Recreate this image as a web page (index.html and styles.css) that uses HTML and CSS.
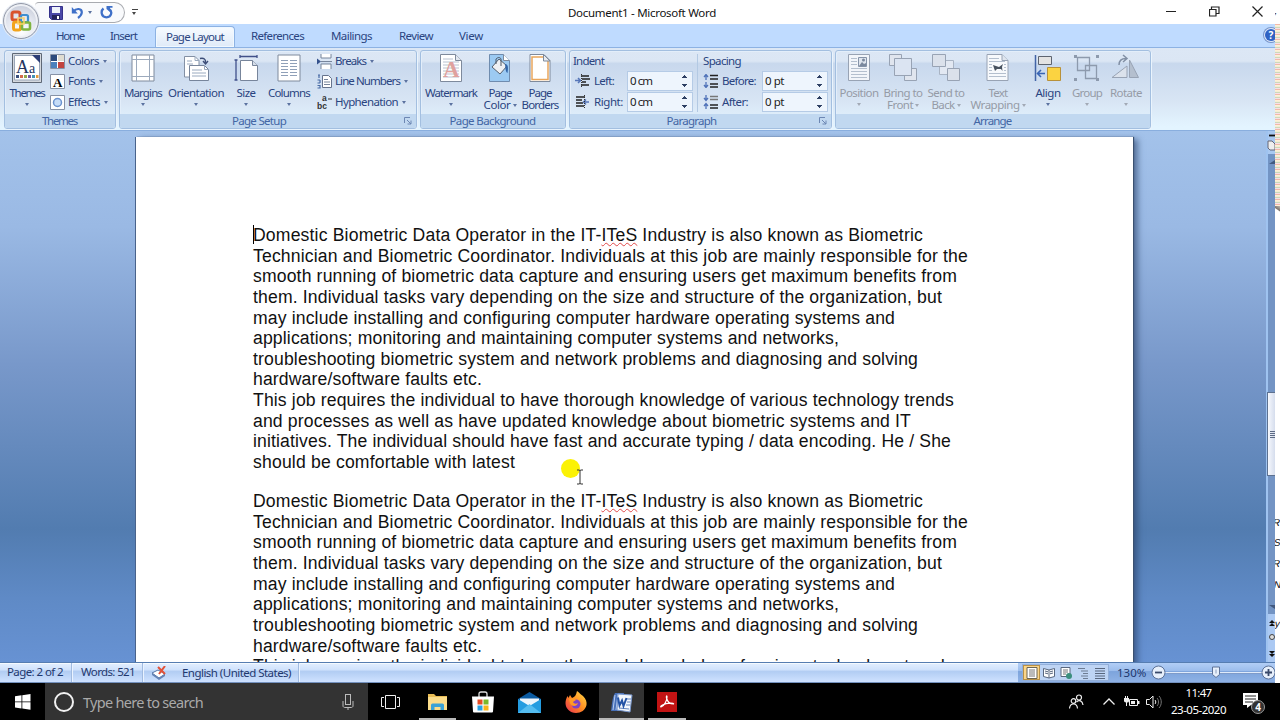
FILE: index.html
```html
<!DOCTYPE html>
<html lang="en">
<head>
    <meta charset="UTF-8">
    <meta name="viewport" content="width=device-width, initial-scale=1.0">
    <title>Document1 - Microsoft Word</title>
    <link rel="stylesheet" href="styles.css">
</head>
<body>
<div class="screen">
    <div class="word">
        <header class="title-bar">
            <div class="quick-access">
                <svg width="14" height="14" viewBox="0 0 14 14"><path d="M.5.5h13v13h-11l-2-2z" fill="#4a48a8" stroke="#35318a"/><path d="M3 1h8v6H3z" fill="#eef2fb"/><path d="M3 9h8v4.500H3z" fill="#24245c"/><path d="M8 10h2v3H8z" fill="#fff"/></svg>
                <svg class="undo" width="13" height="13" viewBox="0 0 13 13"><path d="M2.500 5.500C5 2 11 2 10.800 6.500 10.600 9 9 10.500 7 12" fill="none" stroke="#3f70c8" stroke-width="2.200"/><path d="M.8 1v6.500h6z" fill="#3f70c8"/></svg>
                <i class="arrow"></i>
                <svg class="redo" width="13" height="13" viewBox="0 0 13 13"><path d="M3.500 2.500C.5 5 1 11.200 6.500 11.300 12 11.200 12.500 5 9 3" fill="none" stroke="#3f70c8" stroke-width="2.300"/><path d="M6.500 0h6v1.800H10V6L6.500 3z" fill="#3f70c8"/></svg>
            </div>
            <div class="customize"><i class="arrow"></i></div>
            <div class="doc-title"><span data-w="148">Document1 - Microsoft Word</span></div>
            <div class="window-buttons">
                <svg width="11" height="11" viewBox="0 0 11 11"><path d="M0 5.500h10" stroke="#222"/></svg>
                <svg width="11" height="11" viewBox="0 0 11 11"><path d="M.5 3.500h6.500v6.500H.5zM2.500 3.500V1h7.500v6.500H7" fill="none" stroke="#222" stroke-width="1.200"/></svg>
                <svg width="11" height="11" viewBox="0 0 11 11"><path d="M.5.5l10 10M10.500.5l-10 10" stroke="#222" stroke-width="1.200"/></svg>
            </div>
        </header>
        <div class="office-button">
            <svg width="24" height="24" viewBox="0 0 24 24" fill="none"><rect x="3" y="3" width="8" height="8" rx="2" stroke="#d9532c" stroke-width="3"/><rect x="12" y="6" width="7" height="7" rx="1.500" stroke="#3f8fd0" stroke-width="2.200"/><rect x="4.500" y="13" width="7" height="8" rx="2" stroke="#f2a41c" stroke-width="3"/><rect x="13" y="13.500" width="8" height="7" rx="1.500" stroke="#7fb440" stroke-width="2.600"/><rect x="9" y="9" width="6" height="6" stroke="#fbd36b" stroke-width="1.500"/></svg>
        </div>

        <nav class="tabs">
            <span class="tab t-home"><span data-w="28">Home</span></span>
            <span class="tab t-insert"><span data-w="27">Insert</span></span>
            <span class="tab active"><span data-w="58">Page Layout</span></span>
            <span class="tab t-references"><span data-w="53">References</span></span>
            <span class="tab t-mailings"><span data-w="41">Mailings</span></span>
            <span class="tab t-review"><span data-w="34">Review</span></span>
            <span class="tab t-view"><span data-w="24">View</span></span>
            <span class="help">?</span>
        </nav>

        <div class="ribbon">
            <section class="group g-themes">
                <div class="tools">
                    <div class="big w46">
                        <svg width="30" height="30" viewBox="0 0 30 30"><path d="M.5.5h29v29H.5z" fill="#d4d8de" stroke="#5f6876"/><path d="M2.500 2.500h19l6 6v18.500h-25z" fill="#fff" stroke="#9aa6b8"/><path d="M20 2h8v8z" fill="#2b3d76"/><text x="4" y="20" class="aa" font-size="18">A</text><text x="17" y="20" class="aa" font-size="14">a</text><path d="M4 23.500h3" stroke="#394f7d" stroke-width="3"/><path d="M8 23.500h3" stroke="#d46a4d" stroke-width="3"/><path d="M12 23.500h3" stroke="#94a94b" stroke-width="3"/><path d="M16 23.500h3" stroke="#7258a0" stroke-width="3"/><path d="M20 23.500h3" stroke="#4394b5" stroke-width="3"/><path d="M24 23.500h2.500" stroke="#e39a3c" stroke-width="3"/></svg>
                        <span data-w="35">Themes</span><i class="arrow"></i>
                    </div>
                    <div class="smalls">
                        <div class="small"><svg width="15" height="15" viewBox="0 0 15 15"><path d="M.5.5h14v14H.5z" fill="#fff" stroke="#8792a6"/><path d="M1 1h6v6H1z" fill="#2c4a7d"/><path d="M8 1h6v6H8z" fill="#dfdcd1"/><path d="M1 8h6v6H1z" fill="#4c80bc"/><path d="M8 8h6v6H8z" fill="#c1443f"/></svg><span data-w="31">Colors</span><i class="arrow"></i></div>
                        <div class="small"><svg width="15" height="15" viewBox="0 0 15 15"><path d="M.5.5h14v14H.5z" fill="#fff" stroke="#8792a6"/><text x="3" y="12.500" class="fonts-a">A</text></svg><span data-w="27">Fonts</span><i class="arrow"></i></div>
                        <div class="small"><svg width="15" height="15" viewBox="0 0 15 15"><path d="M.5.5h14v14H.5z" fill="#fff" stroke="#8792a6"/><circle cx="7.500" cy="7.500" r="4" fill="#c7ddf8" stroke="#6b93cf" stroke-width="1.500"/></svg><span data-w="32">Effects</span><i class="arrow"></i></div>
                    </div>
                </div>
                <footer><span data-w="35">Themes</span></footer>
            </section>

            <section class="group g-setup">
                <div class="tools">
                    <div class="big w48">
                        <svg width="24" height="30" viewBox="0 0 24 30"><path d="M1 2h22v26H1z" fill="#fff" stroke="#7e8a9c"/><path d="M5.500 2v26M18.500 2v26M1 6.500h22M1 23.500h22" stroke="#9caabd"/></svg>
                        <span data-w="38">Margins</span><i class="arrow"></i>
                    </div>
                    <div class="big w58">
                        <svg width="28" height="30" viewBox="0 0 28 30"><path d="M2.500 3.500H13l4 4V24H2.500z" fill="#fff" stroke="#8390a4"/><path d="M13 3.500v4h4M5 8h5M5 11h6" fill="none" stroke="#9aaabf"/><path d="M7.500 12.500h15l4 4v11h-19z" fill="#fff" stroke="#77859b"/><path d="M22.500 12.500v4h4M10 17h10M10 20h14M10 23h14" fill="none" stroke="#9aaabf"/><path d="M18 5.500c4-1 6 1 5.500 4M21 8l2.500 3L26 8" fill="none" stroke="#3d4e78" stroke-width="1.400"/></svg>
                        <span data-w="56">Orientation</span><i class="arrow"></i>
                    </div>
                    <div class="big w42">
                        <svg width="24" height="30" viewBox="0 0 24 30"><path d="M6.500 7.500h12l5 5v15h-17z" fill="#fff" stroke="#77859b"/><path d="M18.500 7.500v5h5" fill="#d6deea" stroke="#77859b"/><path d="M6 3.500h17M6 2v3M23 2v3M2 7v20M.5 7h3M.5 27h3" stroke="#40508a" stroke-width="1.300"/></svg>
                        <span data-w="19">Size</span><i class="arrow"></i>
                    </div>
                    <div class="big w44">
                        <svg width="24" height="30" viewBox="0 0 24 30"><path d="M1 2h22v26H1z" fill="#fff" stroke="#7e8a9c"/><path d="M4 7.500h7M4 10.500h7M4 13.500h7M4 16.500h7M4 19.500h7M4 22.500h7M13 7.500h7M13 10.500h7M13 13.500h7M13 16.500h7M13 19.500h7M13 22.500h7" stroke="#8fa0b8"/></svg>
                        <span data-w="42">Columns</span><i class="arrow"></i>
                    </div>
                    <div class="smalls">
                        <div class="small"><svg width="15" height="15" viewBox="0 0 15 15"><path d="M4 0v4h10V0M4 15v-5h10v5" fill="#fff" stroke="#77859b"/><path d="M4 7.500h11" stroke="#77859b"/><path d="M0 4.500v6l4-3z" fill="#34518c"/></svg><span data-w="31">Breaks</span><i class="arrow"></i></div>
                        <div class="small"><svg width="15" height="15" viewBox="0 0 15 15"><path d="M5.500 1.500h6l3 3v9h-9z" fill="#fff" stroke="#65738c"/><path d="M7 5.500h4M7 8h6M7 10.500h6" stroke="#77859b"/><path d="M1 1h2M2 1v3M.5 6H3M.5 9H3M.5 11.500H3v2.500H.5M3 6v3" fill="none" stroke="#496ba5" stroke-width="1.200"/></svg><span data-w="65">Line Numbers</span><i class="arrow"></i></div>
                        <div class="small"><svg width="15" height="15" viewBox="0 0 15 15"><text x="0" y="14" class="hy">bc</text><text x="5" y="6" class="hy">a</text><path d="M11 4h4" stroke="#333"/></svg><span data-w="63">Hyphenation</span><i class="arrow"></i></div>
                    </div>
                </div>
                <footer><span data-w="54">Page Setup</span><svg class="launcher" width="8" height="8" viewBox="0 0 8 8"><path d="M.5 6V.5H6M3 3l4 4M7 3.500V7H3.500" fill="none" stroke="#6d87b3"/></svg></footer>
            </section>

            <section class="group g-background">
                <div class="tools">
                    <div class="big w62">
                        <svg width="22" height="30" viewBox="0 0 22 30"><path d="M.5 1.500h15l6 6v21H.5z" fill="#fff" stroke="#7e8a9c"/><path d="M15.500 1.500v6h6" fill="#e3e8f0" stroke="#7e8a9c"/><path d="M3 6h10M3 9h16M3 12h16M3 15h16M3 18h16M3 21h16M3 24h16" stroke="#b9c2d0"/><text x="3" y="24" class="wm">A</text></svg>
                        <span data-w="52">Watermark</span><i class="arrow"></i>
                    </div>
                    <div class="big w36">
                        <svg width="24" height="30" viewBox="0 0 24 30"><path d="M1.500 1.500h14l6 6v21h-20z" fill="#9ccaf2" stroke="#6f8caf"/><path d="M15.500 1.500v6h6" fill="#fff" stroke="#7e8a9c"/><path d="M4 14l7-8 8 7-7 8z" fill="#eef0f3" stroke="#56616f"/><path d="M8 11V6c2-2 4-2 5 0v7" fill="none" stroke="#4c5664"/><path d="M17 11c4 0 3 6 2.500 9-2-1-2-5-2.500-9z" fill="#3265a8"/></svg>
                        <span data-w="23">Page</span><span class="line2"><span data-w="27">Color</span><i class="arrow"></i></span>
                    </div>
                    <div class="big w44">
                        <svg width="22" height="30" viewBox="0 0 22 30"><path d="M1 1.500h14l6 6v21H1z" fill="#fff" stroke="#7e8a9c"/><path d="M3 4h12l4 4v18.500H3z" fill="#fff" stroke="#e9a65c" stroke-width="1.500"/><path d="M14.500 1.500v6.500h6.500z" fill="#e8ebf1" stroke="#7e8a9c"/></svg>
                        <span data-w="23">Page</span><span class="line2"><span data-w="37">Borders</span></span>
                    </div>
                </div>
                <footer><span data-w="86">Page Background</span></footer>
            </section>

            <section class="group g-paragraph">
                <div class="tools">
                    <div class="fields indent">
                        <div class="heading"><span data-w="31">Indent</span></div>
                        <div class="field"><svg width="15" height="14" viewBox="0 0 15 14"><path d="M6 2h8M7 5h8M7 8h4M6 11h8" stroke="#222" stroke-width="1.500"/><path d="M0 6.500h5M3 4l2.500 2.500L3 9" fill="none" stroke="#5676b8" stroke-width="1.500"/><path d="M6.500 0v14" stroke="#333" stroke-dasharray="1 1"/></svg><label data-w="20">Left:</label><div class="spin"><span data-w="22">0 cm</span><b></b></div></div>
                        <div class="field"><svg width="15" height="14" viewBox="0 0 15 14"><path d="M1 2h9M1 5h6M1 8h7M1 11h8" stroke="#222" stroke-width="1.500"/><path d="M9 7h5M11 4.500L8.500 7 11 9.500" fill="none" stroke="#5676b8" stroke-width="1.500"/><path d="M9.500 0v14" stroke="#333" stroke-dasharray="1 1"/></svg><label data-w="29">Right:</label><div class="spin"><span data-w="22">0 cm</span><b></b></div></div>
                    </div>
                    <div class="fields spacing">
                        <div class="heading"><span data-w="38">Spacing</span></div>
                        <div class="field"><svg width="15" height="14" viewBox="0 0 15 14"><path d="M7 1.500h8M7 5h8M7 10h8M7 13h8" stroke="#222" stroke-width="1.300"/><path d="M3 6V1M1 3l2-2.500L5 3M3 8v5M1 11l2 2.500L5 11" fill="none" stroke="#4f72b8" stroke-width="1.300"/></svg><label data-w="34">Before:</label><div class="spin"><span data-w="19">0 pt</span><b></b></div></div>
                        <div class="field"><svg width="15" height="14" viewBox="0 0 15 14"><path d="M7 1.500h8M7 4.500h8" stroke="#777" stroke-width="1.300"/><path d="M7 10h8M7 13h8" stroke="#222" stroke-width="1.300"/><path d="M3 0v5M1 3l2 2.500L5 3M3 14V8.500M1 11l2-2.500L5 11" fill="none" stroke="#4f72b8" stroke-width="1.300"/></svg><label data-w="26">After:</label><div class="spin"><span data-w="19">0 pt</span><b></b></div></div>
                    </div>
                </div>
                <footer><span data-w="50">Paragraph</span><svg class="launcher" width="8" height="8" viewBox="0 0 8 8"><path d="M.5 6V.5H6M3 3l4 4M7 3.500V7H3.500" fill="none" stroke="#6d87b3"/></svg></footer>
            </section>

            <section class="group g-arrange">
                <div class="tools">
                    <div class="big w48 off">
                        <svg width="24" height="30" viewBox="0 0 24 30"><path d="M1.500 1.500h21v26h-21z" fill="#f2f5fa" stroke="#98a3b4"/><path d="M4 5.500h6M4 8.500h6M4 11.500h6M4 15.500h16M4 18.500h16M4 21.500h16M4 24.500h16" stroke="#b4bfce"/><path d="M11.500 4.500h8v9h-8z" fill="#dfe5ee" stroke="#8593a8"/><path d="M12 13l3-4 2 2 2-1v3z" fill="#7b899e"/><circle cx="16.500" cy="7" r="1.500" fill="#7b899e"/></svg>
                        <span data-w="39">Position</span><i class="arrow"></i>
                    </div>
                    <div class="big w40 off">
                        <svg width="30" height="30" viewBox="0 0 30 30"><path d="M1.500 1.500h12v11h-12zM16.500 15.500h12v12h-12z" fill="#e0e5ee" stroke="#98a3b4"/><path d="M6.500 5.500h17v17h-17z" fill="#dbe4f2" stroke="#98a3b4"/></svg>
                        <span data-w="39">Bring to</span><span class="line2"><span data-w="26">Front</span><i class="arrow"></i></span>
                    </div>
                    <div class="big w46 off">
                        <svg width="30" height="30" viewBox="0 0 30 30"><path d="M8.500 7.500h14v14h-14z" fill="#e2e8f2" stroke="#a9b4c4"/><path d="M1.500 1.500h13v12h-13zM16.500 15.500h12v12h-12z" fill="#dbe1eb" stroke="#98a3b4"/></svg>
                        <span data-w="37">Send to</span><span class="line2"><span data-w="23">Back</span><i class="arrow"></i></span>
                    </div>
                    <div class="big w58 off">
                        <svg width="24" height="30" viewBox="0 0 24 30"><path d="M1 1.500h15l6 6v20H1z" fill="#f7f9fc" stroke="#98a3b4"/><path d="M16 1.500v6h6" fill="#dfe5ee" stroke="#98a3b4"/><path d="M3 5.500h10M3 8.500h16M3 11.500h3M18 11.500h2M3 14.500h3M18 14.500h2M3 17.500h3M18 17.500h2M3 20.500h17M3 23.500h17" stroke="#b4bfce"/><path d="M7 12l3 1 3 1 4-3-1 3 .5 4-1.500-2h-4l-2 2z" fill="#47515e"/></svg>
                        <span data-w="19">Text</span><span class="line2"><span data-w="49">Wrapping</span><i class="arrow"></i></span>
                    </div>
                    <div class="big w42">
                        <svg width="28" height="30" viewBox="0 0 28 30"><path d="M1.500 2v26" stroke="#4264a6" stroke-width="1.500"/><path d="M4.500 3.500h13v8h-13z" fill="#e3e3e3" stroke="#5d6470"/><path d="M13.500 14.500h13v13h-13z" fill="#fbd341" stroke="#b8913a"/><path d="M4 20.500h7M7 17l-3.500 3.500L7 24" fill="none" stroke="#3965b4" stroke-width="1.600"/></svg>
                        <span data-w="25">Align</span><i class="arrow"></i>
                    </div>
                    <div class="big w36 off">
                        <svg width="26" height="30" viewBox="0 0 26 30"><path d="M3.500 4.500h12v13h-12zM11.500 12.500h11v13h-11z" fill="none" stroke="#8d9aad" stroke-width="1.300"/><path d="M0 2h3v3H0zM22 2h3v3h-3zM0 25h3v3H0zM22 25h3v3h-3z" fill="#8d9aad"/></svg>
                        <span data-w="30">Group</span><i class="arrow"></i>
                    </div>
                    <div class="big w42 off">
                        <svg width="30" height="30" viewBox="0 0 30 30"><path d="M1 24.500h15V13z" fill="#dbe2ec" stroke="#98a3b4"/><path d="M18.500 24.500V7l9 17.500z" fill="#b4bfce" stroke="#98a3b4"/><path d="M8 12c0-5 3-6.500 7-6.500M12 2l4 3.500L12 9" fill="none" stroke="#8290a5" stroke-width="1.500"/></svg>
                        <span data-w="32">Rotate</span><i class="arrow"></i>
                    </div>
                </div>
                <footer><span data-w="38">Arrange</span></footer>
            </section>
        </div>

        <main class="workspace">
            <article class="page">
                <div class="paragraph">
                    <i class="caret"></i>
                    <p><span data-w="670">Domestic Biometric Data Operator in the IT-<u>ITeS</u> Industry is also known as Biometric</span></p>
                    <p><span data-w="715">Technician and Biometric Coordinator. Individuals at this job are mainly responsible for the</span></p>
                    <p><span data-w="704">smooth running of biometric data capture and ensuring users get maximum benefits from</span></p>
                    <p><span data-w="689">them. Individual tasks vary depending on the size and structure of the organization, but</span></p>
                    <p><span data-w="642">may include installing and configuring computer hardware operating systems and</span></p>
                    <p><span data-w="586">applications; monitoring and maintaining computer systems and networks,</span></p>
                    <p><span data-w="665">troubleshooting biometric system and network problems and diagnosing and solving</span></p>
                    <p><span data-w="229">hardware/software faults etc.</span></p>
                    <p><span data-w="701">This job requires the individual to have thorough knowledge of various technology trends</span></p>
                    <p><span data-w="658">and processes as well as have updated knowledge about biometric systems and IT</span></p>
                    <p><span data-w="698">initiatives. The individual should have fast and accurate typing / data encoding. He / She</span></p>
                    <p><span data-w="262">should be comfortable with latest</span></p>
                </div>
                <div class="paragraph">
                    <p><span data-w="670">Domestic Biometric Data Operator in the IT-<u>ITeS</u> Industry is also known as Biometric</span></p>
                    <p><span data-w="715">Technician and Biometric Coordinator. Individuals at this job are mainly responsible for the</span></p>
                    <p><span data-w="704">smooth running of biometric data capture and ensuring users get maximum benefits from</span></p>
                    <p><span data-w="689">them. Individual tasks vary depending on the size and structure of the organization, but</span></p>
                    <p><span data-w="642">may include installing and configuring computer hardware operating systems and</span></p>
                    <p><span data-w="586">applications; monitoring and maintaining computer systems and networks,</span></p>
                    <p><span data-w="665">troubleshooting biometric system and network problems and diagnosing and solving</span></p>
                    <p><span data-w="229">hardware/software faults etc.</span></p>
                    <p><span data-w="701">This job requires the individual to have thorough knowledge of various technology trends</span></p>
                </div>
            </article>
            <div class="scrollbar">
                <div class="scroll-top"><svg width="9" height="23" viewBox="0 0 9 23"><path d="M3 4.500h6" stroke="#111" stroke-width="1.800"/><path d="M2 10h4l3 3v6H4l-2-2z" fill="#eee" stroke="#667"/></svg></div>
                <div class="track">
                    <i class="up"></i>
                    <div class="thumb"><i></i></div>
                    <i class="down"></i>
                </div>
                <div class="browse"><svg width="9" height="46" viewBox="0 0 9 46"><path d="M3 9l3-3 3 3zM3 12l3-3 3 3z" fill="#111"/><circle cx="6" cy="23" r="2.500" fill="#ddd" stroke="#444"/><path d="M3 37h6l-3 3zM3 40h6l-3 3z" fill="#111"/></svg></div>
            </div>
            <div class="spotlight"></div>
            <svg class="ibeam" width="8" height="16" viewBox="0 0 8 16"><path d="M1 1h2l1 .5L5 1h2M4 1.500v13M1 15h2l1-.5 1 .5h2" fill="none" stroke="#333"/></svg>
        </main>

        <div class="status-bar">
            <span class="cell c-page"><span data-w="56">Page: 2 of 2</span></span>
            <span class="cell c-words"><span data-w="54">Words: 521</span></span>
            <span class="cell c-lang"><svg width="16" height="14" viewBox="0 0 16 14"><path d="M1 7l6-3 7 4-6 4z" fill="#fff" stroke="#5577aa"/><path d="M1 7v2l7 5 6-4V8l-6 4z" fill="#6684b5"/><path d="M7 1l7 7M14 0L8 8" stroke="#e25238" stroke-width="2"/></svg><span data-w="109">English (United States)</span></span>
            <div class="zoom-area">
                <div class="views">
                    <span class="on"><svg width="12" height="12" viewBox="0 0 12 12"><path d="M1 .5h10v11H1z" fill="#fff" stroke="#6b6552"/><path d="M3 3h6M3 5h6M3 7h6M3 9h6" stroke="#777"/></svg></span>
                    <span><svg width="12" height="12" viewBox="0 0 12 12"><path d="M.5 1.500L6 3l5.500-1.500v8L6 11 .5 9.500zM6 3v8" fill="#fff" stroke="#59677e"/><path d="M2 4l3 .8M2 6l3 .8M7 4.800L10 4M7 6.800L10 6" stroke="#59677e"/></svg></span>
                    <span><svg width="12" height="12" viewBox="0 0 12 12"><path d="M1 .5h9v9H1z" fill="#fff" stroke="#59677e"/><path d="M3 3h5M3 5h5M3 7h3" stroke="#777"/><circle cx="9" cy="9" r="3" fill="#3b8f7d"/></svg></span>
                    <span><svg width="12" height="12" viewBox="0 0 12 12"><path d="M1 1.500h7M4 4h7M6 6.500h5M4 9h7M6 11.500h5" stroke="#6d7c93"/></svg></span>
                    <span><svg width="12" height="12" viewBox="0 0 12 12"><path d="M1 1.500h10M1 4h10M1 6.500h10M1 9h10M1 11.500h10" stroke="#59677e" stroke-width="1.200"/></svg></span>
                </div>
                <span class="percent" data-w="25">130%</span>
                <svg width="124" height="18" viewBox="0 0 124 18"><path d="M14 8.500h102" stroke="#dfeafa"/><path d="M16 9.500h98" stroke="#7e9bca"/><circle cx="7.500" cy="8.500" r="6.500" fill="#e6effb" stroke="#5d7298"/><path d="M4 8.500h7" stroke="#39496a" stroke-width="1.800"/><circle cx="117.500" cy="8.500" r="6.500" fill="#e6effb" stroke="#5d7298"/><path d="M114 8.500h7M117.500 5v7" stroke="#39496a" stroke-width="1.800"/><path d="M61.500 3h7v7.500l-3.500 3-3.500-3z" fill="#e6effb" stroke="#5d7298"/><path d="M65 5.500v4" stroke="#8a9cbc"/></svg>
            </div>
        </div>
    </div>

    <aside class="edge">
        <span class="e1">‚</span>
        <span class="e2">R</span><span class="e3">S</span><span class="e4">R</span><span class="e5">N</span><span class="e6">y</span>
    </aside>

    <div class="taskbar">
        <div class="start"><svg width="16" height="16" viewBox="0 0 16 16" fill="#fff"><path d="M0 2.300l6.500-1v6.200H0zM7.300 1.200L15.500 0v7.500H7.300zM0 8.300h6.500v6.200l-6.500-1zM7.300 8.300h8.200v7.500l-8.200-1.200z"/></svg></div>
        <div class="search">
            <i class="cortana"></i><span data-w="120">Type here to search</span>
            <svg width="12" height="16" viewBox="0 0 12 16" fill="none" stroke="#bbb"><rect x="3.500" y=".5" width="5" height="10"/><path d="M1 7v5c0 1 1 1.500 2 1.500h6c1 0 2-.5 2-1.500V7M6 13.500V16"/></svg>
        </div>
        <div class="app"><svg width="20" height="14" viewBox="0 0 20 14" fill="none" stroke="#eee"><path d="M4.500.5h10v13h-10zM3 2.500H.5v9H3M16 2.500h2.500v9H16"/></svg></div>
        <div class="app open explorer"><svg width="21" height="18" viewBox="0 0 21 18"><path d="M1 1h6l2 2h11v14H1z" fill="#e9bd55"/><path d="M1 4h19v13H1z" fill="#fbdd8b"/><path d="M4 17v-5q0-1.500 1.500-1.500h10q1.500 0 1.500 1.500v5h-3.500v-3h-6v3z" fill="#3aa2d6"/></svg></div>
        <div class="app"><svg width="22" height="22" viewBox="0 0 22 22"><path d="M7 6V3q0-2 2-2h4q2 0 2 2v3" fill="none" stroke="#ddd" stroke-width="1.300"/><path d="M0 5.500h22l-1 15q0 1-1 1H2q-1 0-1-1z" fill="#fff"/><path d="M5.500 8.500h5v5h-5z" fill="#e74c25"/><path d="M11.500 8.500h5v5h-5z" fill="#7ab82a"/><path d="M5.500 14.500h5v5h-5z" fill="#28a1e2"/><path d="M11.500 14.500h5v5h-5z" fill="#f8b51b"/></svg></div>
        <div class="app"><svg width="23" height="21" viewBox="0 0 23 21"><path d="M0 7l11.500-7L23 7v4H0z" fill="#0b5a9f"/><path d="M2 6.500h19v9H2z" fill="#eef5fb"/><path d="M0 7l11.500 7L23 7v14H0z" fill="#249ce0"/><path d="M0 21l11.500-9L23 21z" fill="#55bdf0"/></svg></div>
        <div class="app"><svg width="22" height="22" viewBox="0 0 22 22"><defs><linearGradient id="fx" x1="1" y1="0" x2="0" y2="1"><stop offset="0" stop-color="#ffe14a"/><stop offset=".5" stop-color="#ff8b21"/><stop offset="1" stop-color="#e92d55"/></linearGradient></defs><path d="M12 0c3 2 4 4 6 5 3 3 4 6 3.500 9C20.500 19 16 22 11 22 5 22 .5 17.500.5 12c0-3 1-5 2-7l1 2 1.500-3 2 3c3-1 4-3 5-7z" fill="url(#fx)"/><circle cx="11" cy="13" r="4.500" fill="#7b42c9"/><path d="M4 8c3-1 5-1 7 1l-3 2c1 2 3 2 5 1-1 4-7 4-8 0z" fill="#ff9a26"/></svg></div>
        <div class="app open current"><svg width="23" height="21" viewBox="0 0 23 21"><path d="M5 1h9l-2 18H1C2 13 2 6 5 1z" fill="#476fb7"/><path d="M5 3l-2 15M8 2L6 18" stroke="#b9cdef"/><path d="M8 2l14 1-2 17-13-2z" fill="#f4f7fc" stroke="#7796cc"/><path d="M17 7h4M17 10h3.500M16 13h4M9 16l10 1" stroke="#6486c0"/><path d="M8 5.500l1.500 8 2.500-5 1.500 5.500L16.500 6" fill="none" stroke="#2453a5" stroke-width="2"/></svg></div>
        <div class="app open acrobat"><svg width="20" height="20" viewBox="0 0 20 20"><path d="M0 0h20v20H0z" fill="#c21313"/><path d="M4 15c3-1 6-6 6-10 0-2-1-1-.5 1 1 4 4 6 7 6 1-1-6-1.500-11 1-2 1-2 2-1.500 2z" fill="none" stroke="#fff" stroke-width="1.200"/></svg></div>
        <div class="tray">
            <svg class="people" width="15" height="16" viewBox="0 0 15 16" fill="none" stroke="#eee" stroke-width="1.200"><circle cx="4.500" cy="7" r="2.300"/><path d="M.5 14.500c.5-6 7.500-6 8 0"/><circle cx="10" cy="3.500" r="2.500"/><path d="M7.500 8c2.500-3 6-1 6.500 3"/></svg>
            <svg class="chevron" width="12" height="7" viewBox="0 0 12 7" fill="none" stroke="#eee" stroke-width="1.300"><path d="M.5 6.500L6 1l5.500 5.500"/></svg>
            <svg class="battery" width="16" height="12" viewBox="0 0 16 12"><path d="M5.500 3.500h8v6h-8z" fill="none" stroke="#eee"/><path d="M7 5h4v3H7zM14 5h1.500v3H14zM0 2h5v3q0 1.500-1.500 1.500H3V10H2V6.500Q0 6 0 5zM1 0h1v2H1zM3 0h1v2H3z" fill="#eee"/></svg>
            <svg class="volume" width="16" height="14" viewBox="0 0 16 14" fill="none" stroke="#eee"><path d="M.5 4.500h3L7 1v12L3.500 9.500h-3zM9 5c1 1 1 3 0 4"/><path d="M11 3c2 2 2 6 0 8M13 1c3 3 3 9 0 12" stroke="#777"/></svg>
            <div class="clock"><span data-w="26">11:47</span><span data-w="55">23-05-2020</span></div>
            <div class="notice"><svg width="16" height="16" viewBox="0 0 16 16"><path d="M0 0h15v12H8l-4 3v-3H0z" fill="#fff"/><path d="M2 3h11M2 6h11M2 9h8" stroke="#222"/></svg><b>4</b></div>
        </div>
    </div>
</div>

<script>
    // Tighten or open the tracking so each label fills its own measure
    document.querySelectorAll('[data-w]').forEach(function (el) {
        var width = el.getBoundingClientRect().width;
        var count = el.textContent.length;
        el.style.letterSpacing = ((el.dataset.w - width) / count) + 'px';
    });
</script>
</body>
</html>
```
FILE: styles.css
```css
* {
    box-sizing: border-box;
}

body {
    margin: 0;
    background: #fff;
    overflow: hidden;
    font-family: "Noto Sans", "Open Sans", sans-serif;
    font-size: 11.5px;
    color: #2a4480;
}

svg {
    display: block;
    flex: none;
}

[data-w] {
    display: inline-block;
    white-space: nowrap;
}

.screen {
    display: grid;
    grid-template: 683px 37px / 1275px 5px;
    width: 1280px;
    height: 720px;
    overflow: hidden;
}

.word {
    position: relative;
    display: flex;
    flex-direction: column;
    overflow: hidden;
}

.arrow {
    flex: none;
    width: 0;
    height: 0;
    border: 2.5px solid transparent;
    border-top: 3px solid #5b72a0;
    border-bottom: 0;
}

/* title bar */
.title-bar {
    display: flex;
    height: 24px;
    background: #fff;
    color: #111;
}

.quick-access {
    display: flex;
    align-items: center;
    width: 90px;
    height: 21px;
    margin: 2px 0 0 35px;
    padding-left: 14px;
    border: 1px solid #a9abb0;
    border-left: 0;
    border-radius: 4px 11px 11px 0;
    background: #f9fafc;
}

.undo {
    margin: 0 4px 0 8px;
}

.redo {
    margin-left: 8px;
}

.customize {
    width: 6px;
    height: 7px;
    margin: 9px 0 0 7px;
    border-top: 1.5px solid #444;
    padding-top: 2px;
}

.customize .arrow {
    display: block;
    border-top-color: #444;
}

.doc-title {
    margin-left: 430px;
    line-height: 25px;
}

.window-buttons {
    display: flex;
    gap: 32px;
    margin: 6px 12px 0 auto;
}

.office-button {
    position: absolute;
    left: 3px;
    top: 3px;
    display: flex;
    align-items: center;
    justify-content: center;
    width: 36px;
    height: 36px;
    border: 1px solid #9298a6;
    border-radius: 50%;
    background: radial-gradient(circle at 50% 80%, #fff, #e2e5ee 50%, #b9bfcf);
    box-shadow: inset 0 0 0 2px #eef0f5, 0 0 0 1px #e6ebf4;
    z-index: 1;
}

/* tabs */
.tabs {
    display: flex;
    height: 23px;
    padding-left: 56px;
    background: #bfdbff;
    line-height: 24px;
}

.t-home { width: 54px; }
.t-insert { width: 45px; }
.t-references { width: 80px; margin-left: 16px; }
.t-mailings { width: 68px; }
.t-review { width: 60px; }

.tab.active {
    width: 80px;
    margin-top: 2px;
    padding-left: 10px;
    line-height: 19px;
    border: 1px solid #8db2e3;
    border-bottom: 0;
    border-radius: 4px 4px 0 0;
    background: linear-gradient(#f7fbff, #dfeaf8);
    box-shadow: inset 0 0 0 1px #f0f8ff;
}

.help {
    width: 12px;
    height: 12px;
    margin: 5px -2px 0 auto;
    border-radius: 50%;
    background: #2f62c4;
    box-shadow: 0 0 0 1px #dfe9fa, 0 0 0 2px #7794c9;
    color: #fff;
    font-size: 10px;
    font-weight: bold;
    line-height: 12px;
    text-align: center;
}

/* ribbon */
.ribbon {
    display: flex;
    gap: 3px;
    height: 84px;
    padding: 2px 0 2px 4px;
    border-top: 1px solid #8db2e3;
    border-bottom: 1px solid #89aede;
    background: linear-gradient(#dce7f5, #dbe6f4 16%, #c8d8ed 19%, #d8e5f4 65%, #e3f4ff 96%);
}

.group {
    display: flex;
    flex-direction: column;
    height: 79px;
    border: 1px solid #a3bfe0;
    border-radius: 3px;
    box-shadow: 1px 1px 0 #eaf4fd, inset 1px 1px 0 #e3eefa;
    overflow: hidden;
}

.g-themes { width: 112px; }
.g-setup { width: 298px; }
.g-background { width: 146px; }
.g-paragraph { width: 263px; }
.g-arrange { width: 316px; }

.tools {
    display: flex;
    height: 63px;
    margin-left: -1px;
}

.group footer {
    position: relative;
    height: 14px;
    padding-right: 18px;
    background: #c1d8f0;
    color: #4366a4;
    line-height: 14px;
    text-align: center;
}

.g-themes footer,
.g-background footer,
.g-arrange footer {
    padding-right: 1px;
}

.launcher {
    position: absolute;
    right: 4px;
    top: 3px;
}

.big {
    display: flex;
    flex-direction: column;
    align-items: center;
    flex: none;
    padding-top: 2px;
    line-height: 12px;
}

.big > svg {
    margin-bottom: 3px;
}

.big > .arrow {
    margin-top: 4px;
}

.big > [data-w] {
    margin-top: 1px;
}

.line2 {
    display: flex;
    align-items: center;
    gap: 2px;
    white-space: nowrap;
}

.w36 { width: 36px; }
.w40 { width: 40px; }
.w42 { width: 42px; }
.w44 { width: 44px; }
.w46 { width: 46px; }
.w48 { width: 48px; }
.w58 { width: 58px; }
.w62 { width: 62px; }

.off {
    color: #959ba6;
}

.off .arrow {
    border-top-color: #a2a9b5;
}

.aa {
    font-family: "Liberation Serif", serif;
    fill: #24355e;
}

.fonts-a {
    font: bold 13px "Liberation Serif", serif;
}

.hy {
    font: bold 8.5px "Liberation Sans", sans-serif;
    fill: #333;
}

.wm {
    font: bold 23px "Liberation Serif", serif;
    fill: #e0a19e;
}

.smalls {
    display: flex;
    flex-direction: column;
}

.g-setup .smalls {
    padding-left: 6px;
}

.small {
    display: flex;
    align-items: center;
    height: 20.5px;
    line-height: 18px;
}

.small svg {
    width: 15px;
    margin-right: 3px;
}

.small .arrow {
    margin-left: 4px;
}

.small [data-w],
.field [data-w] {
    margin-top: -1px;
}

/* paragraph fields */
.fields {
    width: 128px;
    padding: 0 4px 0 4px;
}

.fields.spacing {
    width: 131px;
    height: 58px;
    margin-top: 3px;
    padding: 0 0 0 5px;
    border-left: 1px solid #b3c9e3;
}

.heading {
    height: 20px;
    line-height: 19px;
}

.spacing .heading {
    height: 17px;
    line-height: 13px;
}

.field {
    display: flex;
    align-items: center;
    height: 20.5px;
    padding-left: 2px;
}

.spacing .field {
    padding-left: 0;
}

.field svg {
    margin-right: 4px;
}

.spin {
    display: flex;
    align-items: center;
    justify-content: space-between;
    width: 66px;
    height: 20px;
    margin-left: auto;
    padding: 0 5px 0 2px;
    border: 1px solid #b5cbe6;
    background: #eef5fd;
    color: #222;
}

.spin b {
    width: 5px;
    height: 12px;
    background:
        conic-gradient(from 135deg at 50% 0, #2d3f63 90deg, transparent 0) 0 0 / 5px 3px no-repeat,
        conic-gradient(from -45deg at 50% 100%, #2d3f63 90deg, transparent 0) 0 100% / 5px 3px no-repeat;
}

/* workspace */
.workspace {
    position: relative;
    display: flex;
    justify-content: space-between;
    height: 531px;
    padding: 6px 0 0 136px;
    background: linear-gradient(#a3c2ea, #9ab9e4 18%, #7898ca 44%, #527cb0 75%, #5f8ac6 88%, #6792d3);
    overflow: hidden;
}

.page {
    width: 997px;
    height: 600px;
    padding: 88px 0 0 117px;
    background: #fff;
    box-shadow: -1px 0 0 #49638b, 1px 0 1px #3b5170, 5px 2px 6px rgba(40, 65, 105, 0.6);
    color: #111;
    font-family: "Liberation Sans", Arial, sans-serif;
    font-size: 17.6px;
}

.paragraph {
    position: relative;
    margin-bottom: 18.7px;
}

.paragraph p {
    height: 20.64px;
    margin: 0;
    line-height: 20.64px;
}

.paragraph u {
    text-decoration: underline wavy #e04848 1px;
    text-underline-offset: 1px;
    text-decoration-skip-ink: none;
}

.caret {
    position: absolute;
    left: 0;
    top: 0;
    width: 1px;
    height: 19px;
    background: #000;
}

.scrollbar {
    display: flex;
    flex-direction: column;
    width: 9px;
    margin-top: -6px;
    height: 531px;
    background: #8cacdb;
    border-left: 2px solid #9fc3f0;
}

.scroll-top {
    height: 23px;
    background: #a9c8f0;
}

.scroll-top svg,
.browse svg {
    margin-left: -2px;
}

.track {
    display: flex;
    flex-direction: column;
    align-items: flex-end;
    height: 460px;
    background: #7394c4;
}

.up,
.down {
    width: 6px;
    height: 4px;
    margin-top: 6px;
    background: #42597f;
    clip-path: polygon(100% 0, 100% 100%, 0 100%);
}

.down {
    margin-top: auto;
    margin-bottom: 5px;
    clip-path: polygon(0 0, 100% 0, 100% 100%);
}

.thumb {
    display: flex;
    align-items: center;
    justify-content: flex-end;
    width: 8px;
    height: 84px;
    margin-top: 228px;
    border: 1px solid #5d7190;
    border-right: 0;
    background: linear-gradient(90deg, #f6f8fd, #d5dded);
}

.thumb i {
    width: 5px;
    height: 7px;
    background: repeating-linear-gradient(#5d6b85 0 1px, transparent 1px 2px);
}

.browse {
    flex: 1;
    background: #abc9f3;
}

.spotlight {
    position: absolute;
    left: 561px;
    top: 328px;
    width: 19px;
    height: 19px;
    border-radius: 50%;
    background: #fbf205;
}

.ibeam {
    position: absolute;
    left: 576px;
    top: 338px;
}

/* status bar */
.status-bar {
    display: flex;
    height: 21px;
    border-top: 1px solid #567db1;
    border-bottom: 1px solid #7391be;
    background: linear-gradient(#e3efff, #d0e2fc 35%, #b2cdf3 45%, #cfe2ff);
    box-shadow: inset 0 1px 0 #f5faff;
    color: #1f386e;
    line-height: 18px;
}

.cell {
    border-right: 1px solid #a1bbe0;
    box-shadow: 1px 0 0 #eaf3ff;
}

.c-page { width: 72px; padding-left: 7px; }
.c-words { width: 71px; padding-left: 9px; }

.c-lang {
    display: flex;
    align-items: center;
    gap: 15px;
    width: 156px;
    padding-left: 8px;
}

.zoom-area {
    display: flex;
    align-items: center;
    width: 257px;
    margin-left: auto;
    padding-left: 4px;
    background: linear-gradient(#b2cef6, #9cbdec 40%, #7da4dc 45%, #8fb2e5);
}

.views {
    display: flex;
    width: 87px;
    height: 17px;
    border: 1px solid #93afd9;
    background: #bed4f4;
}

.views span {
    display: flex;
    align-items: center;
    justify-content: center;
    width: 17px;
}

.views .on {
    border: 1px solid #b99146;
    background: #fbd68a;
}

.percent {
    width: 25px;
    margin: 0 9px 0 8px;
}

/* strip of the window lying behind */
.edge {
    position: relative;
    overflow: hidden;
    color: #111;
    background:
        repeating-linear-gradient(#f0b9aa 0 1px, #fff0d5 1px 2px, #f4edd7 2px 3px, #cddbb9 3px 4px, #f7dfe8 4px 5px) 0 24px / 5px 182px no-repeat,
        linear-gradient(35deg, transparent 35%, #807870 45%, #b8b0a8 80%) 0 204px / 5px 9px no-repeat,
        #fff;
    font-family: "Liberation Sans", Arial, sans-serif;
    font-size: 10px;
}

.edge span {
    position: absolute;
    left: 0;
    transform: skewX(-12deg);
}

.e1 { top: 5px; }
.edge .e2 { top: 517px; left: -2px; }
.edge .e3 { top: 537px; left: -1px; }
.edge .e4 { top: 558px; left: -2px; }
.edge .e5 { top: 579px; left: -1px; }
.edge .e6 { top: 618px; }

/* taskbar */
.taskbar {
    grid-column: 1 / 3;
    display: flex;
    background: #000;
    color: #fff;
}

.start {
    display: flex;
    align-items: center;
    width: 45px;
    padding-left: 15px;
}

.search {
    display: flex;
    align-items: center;
    width: 323px;
    padding: 0 14px 0 9px;
    background: #333;
    color: #aaa;
    font-size: 14.5px;
}

.search svg {
    margin-left: auto;
}

.cortana {
    width: 20px;
    height: 20px;
    margin-right: 9px;
    border: 2.5px solid #f2f2f2;
    border-radius: 50%;
}

.app {
    display: flex;
    align-items: center;
    justify-content: center;
    width: 46.4px;
    padding-top: 1px;
}

.app:nth-child(3) {
    width: 45px;
}

.app.open {
    border-bottom: 2px solid #b9b9b9;
    padding-top: 3px;
}

.app.explorer {
    width: 37px;
    margin: 0 4px 0 6px;
}

.app.current {
    width: 45px;
    background: #333;
}

.app.acrobat {
    width: 38px;
    margin-left: 4px;
}

.tray {
    display: flex;
    align-items: center;
    margin-left: auto;
    padding-right: 15px;
}

.people { margin-right: 19px; }
.chevron { margin-right: 9px; }
.battery { margin-right: 6px; }
.volume { margin-right: 9px; }

.clock {
    display: flex;
    flex-direction: column;
    align-items: center;
    width: 55px;
    margin: -2px 17px 0 0;
    line-height: 17px;
}

.notice {
    position: relative;
    width: 22px;
    height: 16px;
    margin-top: -2px;
}

.notice b {
    position: absolute;
    left: 8px;
    top: 7px;
    width: 14px;
    height: 14px;
    border: 1px solid #999;
    border-radius: 50%;
    background: #333;
    font-size: 10px;
    line-height: 12px;
    text-align: center;
}
```
